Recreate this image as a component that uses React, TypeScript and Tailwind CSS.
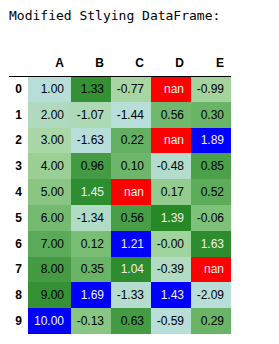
const columns = ["A", "B", "C", "D", "E"];

const rows: string[][] = [
  ["1.00", "1.33", "-0.77", "nan", "-0.99"],
  ["2.00", "-1.07", "-1.44", "0.56", "0.30"],
  ["3.00", "-1.63", "0.22", "nan", "1.89"],
  ["4.00", "0.96", "0.10", "-0.48", "0.85"],
  ["5.00", "1.45", "nan", "0.17", "0.52"],
  ["6.00", "-1.34", "0.56", "1.39", "-0.06"],
  ["7.00", "0.12", "1.21", "-0.00", "1.63"],
  ["8.00", "0.35", "1.04", "-0.39", "nan"],
  ["9.00", "1.69", "-1.33", "1.43", "-2.09"],
  ["10.00", "-0.13", "0.63", "-0.59", "0.29"],
];

// pale blue-green -> forest green
const stops: [number, number[]][] = [
  [0, [183, 222, 216]],
  [0.25, [168, 214, 162]],
  [0.5, [128, 194, 124]],
  [0.75, [72, 158, 72]],
  [1, [36, 134, 36]],
];

function gradient(t: number) {
  for (let i = 1; i < stops.length; i++) {
    const [t1, c1] = stops[i];
    const [t0, c0] = stops[i - 1];
    if (t <= t1) {
      const f = (t - t0) / (t1 - t0);
      const c = c0.map((v, k) => Math.round(v + (c1[k] - v) * f));
      return `rgb(${c[0]}, ${c[1]}, ${c[2]})`;
    }
  }
  return "rgb(36, 134, 36)";
}

const ranges = columns.map((_, j) => {
  const vals = rows.map((r) => r[j]).filter((v) => v !== "nan").map(Number);
  return { min: Math.min(...vals), max: Math.max(...vals) };
});

function cellStyle(label: string, j: number) {
  if (label === "nan") return { background: "#ff0000", color: "#f1f1f1" };
  const v = Number(label);
  const { min, max } = ranges[j];
  if (v === max) return { background: "#0000ff", color: "#f1f1f1" };
  const t = (v - min) / (max - min);
  return { background: gradient(t), color: t > 0.9 ? "#f1f1f1" : "#000000" };
}

export default function App() {
  return (
    <div className="h-[344px] w-[279px] bg-white pl-[9px] pt-[8px]">
      <div className="font-['DejaVu_Sans_Mono',monospace] text-[13px] leading-[16px] text-black">
        Modified Stlying DataFrame:
      </div>
      <table className="mt-[26px] border-collapse font-['Liberation_Sans',Arial,sans-serif] text-[12px] leading-[14px] text-black">
        <thead>
          <tr className="h-[26px] border-b border-black">
            <th className="w-[19px] p-0" />
            {columns.map((c, j) => (
              <th
                key={c}
                className={`p-0 pr-[7px] text-right font-bold ${j === 0 ? "w-[43px]" : "w-[40px]"}`}
              >
                {c}
              </th>
            ))}
          </tr>
        </thead>
        <tbody>
          {rows.map((r, i) => (
            <tr key={i} className="h-[25.8px]">
              <th className="p-0 text-center font-bold">{i}</th>
              {r.map((v, j) => (
                <td key={j} className="p-0 pr-[7px] text-right" style={cellStyle(v, j)}>
                  {v}
                </td>
              ))}
            </tr>
          ))}
        </tbody>
      </table>
    </div>
  );
}
